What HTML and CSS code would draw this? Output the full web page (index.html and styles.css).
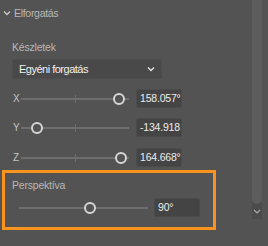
FILE: index.html
```html
<!DOCTYPE html>
<html>
<head>
<meta charset="utf-8">
<link rel="stylesheet" href="styles.css">
</head>
<body>
<div class="panel">
  <div class="main">
    <div class="header">
      <svg class="hchev" width="8" height="6" viewBox="0 0 8 6"><path d="M1 1.5 L4 4.5 L7 1.5" fill="none" stroke="#c8c8c8" stroke-width="1.4"/></svg>
      <span>Elforgatás</span>
    </div>
    <div class="section">
      <div class="label">Készletek</div>
      <div class="dropdown">
        <span>Egyéni forgatás</span>
        <svg width="8" height="6" viewBox="0 0 8 6"><path d="M1 1.5 L4 4.5 L7 1.5" fill="none" stroke="#e0e0e0" stroke-width="1.5"/></svg>
      </div>
      <div class="row r1">
        <span class="axis">X</span>
        <div class="slider"><i class="tick"></i><b class="thumb" style="left:98px"></b></div>
        <div class="input">158.057°</div>
      </div>
      <div class="row r2">
        <span class="axis">Y</span>
        <div class="slider"><i class="tick"></i><b class="thumb" style="left:16px"></b></div>
        <div class="input">-134.918</div>
      </div>
      <div class="row r3">
        <span class="axis">Z</span>
        <div class="slider"><i class="tick"></i><b class="thumb" style="left:100px"></b></div>
        <div class="input">164.668°</div>
      </div>
    </div>
    <div class="persp">
      <div class="label">Perspektíva</div>
      <div class="row prow">
        <div class="slider pslider"><b class="thumb" style="left:71px"></b></div>
        <div class="input">90°</div>
      </div>
    </div>
  </div>
  <div class="scroll">
    <div class="sthumb"></div>
    <svg class="schev" width="8" height="5" viewBox="0 0 8 5"><path d="M1 1 L4 4 L7 1" fill="none" stroke="#a8a8a8" stroke-width="1.2"/></svg>
  </div>
</div>
</body>
</html>
```
FILE: styles.css
```css
html, body {
  margin: 0;
  padding: 0;
  background: #535353;
}
body {
  width: 268px;
  height: 246px;
  overflow: hidden;
  font-family: "Liberation Sans", Arial, sans-serif;
  font-size: 10.5px;
  color: #bcbcbc;
}
.panel {
  display: flex;
  height: 246px;
}
.main {
  flex: 1;
  display: flex;
  flex-direction: column;
}
.header {
  height: 26px;
  display: flex;
  align-items: center;
  padding-left: 3px;
  gap: 3px;
  color: #b9b9b9;
  letter-spacing: -0.3px;
}
.section {
  padding-left: 12px;
  display: flex;
  flex-direction: column;
}
.label {
  margin-top: 14px;
  line-height: 14px;
  height: 14px;
  color: #b8b8b8;
  letter-spacing: -0.2px;
}
.dropdown {
  margin-top: 5px;
  width: 150px;
  height: 20px;
  box-sizing: border-box;
  background: #494949;
  border: 1px solid #4d4d4d;
  border-radius: 2px;
  display: flex;
  align-items: center;
  justify-content: space-between;
  padding: 0 6px 0 6px;
  color: #f0f0f0;
  font-size: 11px;
  letter-spacing: -0.5px;
}
.row {
  display: flex;
  align-items: center;
  height: 19px;
}
.r1 { margin-top: 10px; }
.r2 { margin-top: 10px; }
.r3 { margin-top: 11px; }
.axis {
  width: 8px;
  padding-left: 1px;
  color: #c4c4c4;
  font-size: 10px;
}
.slider {
  position: relative;
  width: 108px;
  height: 2px;
  background: #6e6e6e;
}
.tick {
  position: absolute;
  left: 54px;
  top: -3px;
  width: 1px;
  height: 8px;
  background: #6e6e6e;
}
.thumb {
  position: absolute;
  top: -5px;
  margin-left: -6px;
  width: 8px;
  height: 8px;
  border: 2px solid #d6d6d6;
  border-radius: 50%;
  background: #535353;
}
.input {
  margin-left: 7px;
  width: 46px;
  height: 19px;
  box-sizing: border-box;
  background: #444444;
  border: 1px solid #4b4b4b;
  border-radius: 2px;
  color: #ececec;
  font-size: 10.5px;
  line-height: 17px;
  padding-left: 3px;
  letter-spacing: -0.2px;
}
.persp {
  margin-top: 3px;
  margin-left: 2px;
  width: 214px;
  height: 60px;
  box-sizing: border-box;
  border: 3px solid #f7931e;
  padding-left: 7px;
  display: flex;
  flex-direction: column;
}
.persp .label {
  margin-top: 5px;
}
.prow {
  margin-top: 6px;
  padding-left: 7px;
}
.pslider {
  width: 129px;
}
.prow .input {
  margin-left: 6px;
}
.scroll {
  width: 10px;
  margin-right: 6px;
  height: 219px;
  background: #4b4b4b;
  position: relative;
  display: flex;
  flex-direction: column;
  align-items: center;
}
.sthumb {
  width: 10px;
  height: 204px;
  background: #5d5d5d;
  border-radius: 0 0 5px 5px;
}
.schev {
  margin-top: 5px;
}
```
